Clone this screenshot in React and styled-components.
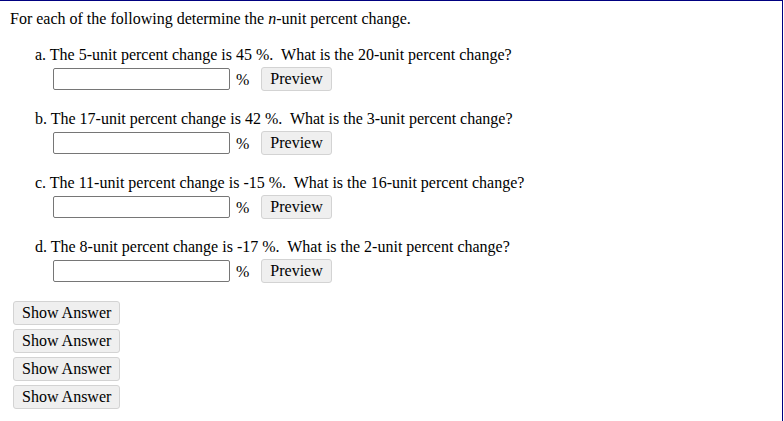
import React from "react";
import styled, { createGlobalStyle } from "styled-components";

const Global = createGlobalStyle`
  html, body { margin: 0; padding: 0; background: #fff; }
  body { font-family: "Liberation Serif", "Times New Roman", serif; font-size: 16px; color: #000; }
`;

const Frame = styled.div`
  box-sizing: border-box;
  width: 783px;
  height: 421px;
  border-top: 1px solid #000080;
  border-right: 1px solid #000080;
  padding: 8px 0 0 10px;
`;

const Title = styled.div`
  line-height: 19px;
  height: 19px;
`;

const Var = styled.i`
  font-style: italic;
`;

const List = styled.div`
  display: flex;
  flex-direction: column;
  gap: 18px;
  margin-top: 17px;
  padding-left: 25px;
`;

const Item = styled.div`
  display: flex;
  flex-direction: column;
  gap: 3px;
`;

const Question = styled.div`
  line-height: 19px;
`;

const AnswerRow = styled.div`
  display: flex;
  align-items: center;
  padding-left: 18px;
  height: 24px;
`;

const Field = styled.input`
  box-sizing: border-box;
  width: 177px;
  height: 22px;
  border: 1px solid #767676;
  border-radius: 2px;
  padding: 1px 2px;
  margin: 0;
  font: inherit;
  background: #fff;
`;

const Unit = styled.span`
  margin-left: 6px;
  line-height: 19px;
`;

const Button = styled.button`
  box-sizing: border-box;
  height: 24px;
  padding: 0 8px;
  margin: 0;
  border: 1px solid #d3d3d3;
  border-radius: 3px;
  background: #efefef;
  font-family: "Liberation Serif", "Times New Roman", serif;
  font-size: 16px;
  color: #000;
  line-height: 20px;
  margin-left: ${(p) => p.$offset || 0}px;
`;

const Answers = styled.div`
  display: flex;
  flex-direction: column;
  align-items: flex-start;
  gap: 4px;
  margin-top: 18px;
  padding-left: 3px;
`;

const items = [
  { l: "a", n1: 5, p: "45", n2: 20 },
  { l: "b", n1: 17, p: "42", n2: 3 },
  { l: "c", n1: 11, p: "-15", n2: 16 },
  { l: "d", n1: 8, p: "-17", n2: 2 },
];

export default function App() {
  return (
    <>
      <Global />
      <Frame>
        <Title>
          For each of the following determine the <Var>n</Var>-unit percent change.
        </Title>
        <List>
          {items.map((it) => (
            <Item key={it.l}>
              <Question>
                {it.l}. The {it.n1}-unit percent change is {it.p} %.&nbsp; What is the {it.n2}-unit percent change?
              </Question>
              <AnswerRow>
                <Field type="text" />
                <Unit>%</Unit>
                <Button $offset={12}>Preview</Button>
              </AnswerRow>
            </Item>
          ))}
        </List>
        <Answers>
          {items.map((it) => (
            <Button key={it.l}>Show Answer</Button>
          ))}
        </Answers>
      </Frame>
    </>
  );
}
